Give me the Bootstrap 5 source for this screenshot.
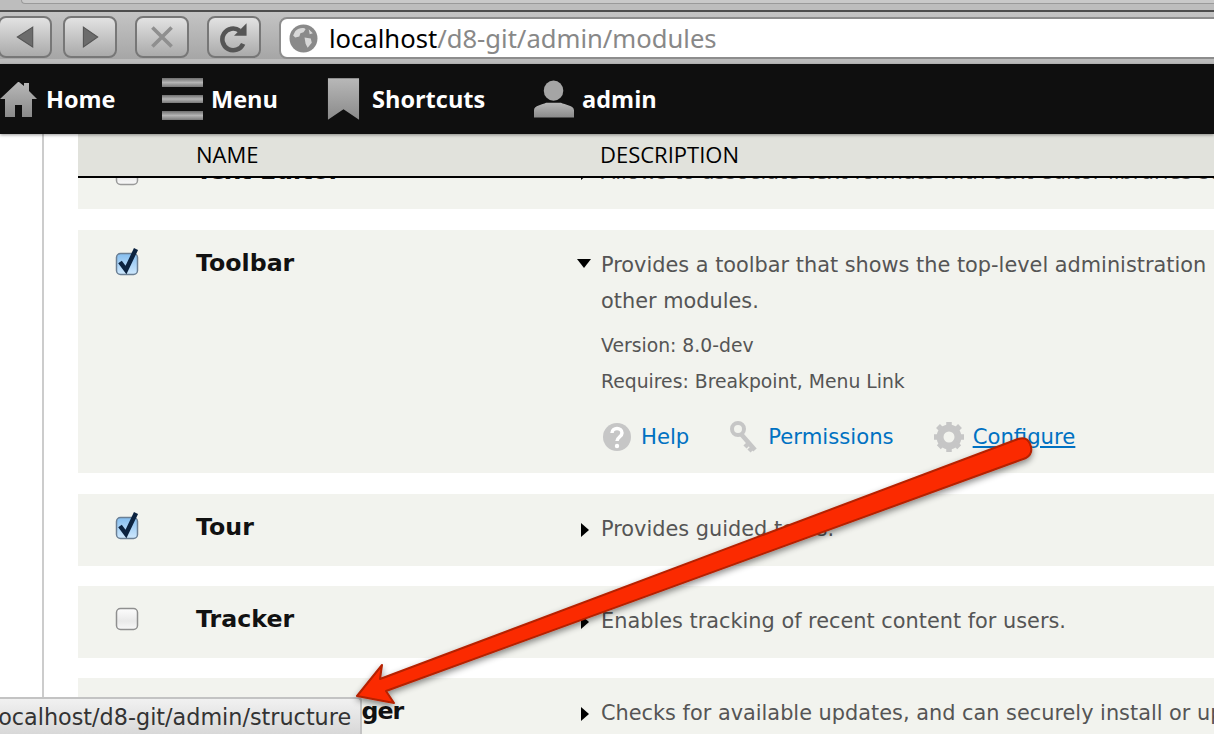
<!doctype html>
<html lang="en"><head><meta charset="utf-8"><title>Modules</title>
<link rel="stylesheet" href="https://cdn.jsdelivr.net/npm/bootstrap@5.3.0/dist/css/bootstrap.min.css">
<style>
html,body{height:100%;overflow:hidden;background:#fff}
.shot{width:1214px;height:734px;overflow:hidden;position:relative;font-family:"DejaVu Sans","Liberation Sans",sans-serif}
.chrome{height:64px;background:#bdbdbd}
.topstrip{height:10px;background:#bdbdbd}
.tabedge{height:4px;margin-left:21px;background:#c9c9c9;border-left:1px solid #9a9a9a;border-bottom:1px solid #9a9a9a;border-bottom-left-radius:8px}
.navrow{height:54px;border-top:2px solid #4d4d4d;padding-top:4px;gap:11px;background:linear-gradient(#c4c4c4,#a6a6a6 90%,#bcbcbc 90%)}
.nbtn{width:54px;height:42px;border:2px solid #777;border-radius:8px;background:linear-gradient(#e2e2e2,#aaa);flex:none}
.nbtn.first{margin-left:-2px}
.nbtn.gapped{margin-left:7px}
.urlbar{height:42px;flex:1;margin:1px -8px 0 7px;background:#fff;border:2px solid #8d8d8d;border-radius:8px;font-family:"Noto Sans",sans-serif;font-size:25.6px;color:#888;padding-left:8px;gap:11px}
.urlbar b{color:#000;font-weight:400}
.urlbar span{padding-top:2px}
.adminbar{height:70px;background:#0f0f0f;color:#fff;font-family:"Open Sans",sans-serif;font-weight:700;font-size:23.5px;position:relative;z-index:3;box-shadow:0 1px 3px rgba(0,0,0,.4)}
.adminbar .tool{gap:4px;flex:none}
.adminbar span{padding-top:2px}
.mainarea{margin-left:42px;border-left:2px solid #ccc;height:600px;padding-left:34px}
.mhead{height:44px;background:#e1e2dc;border-bottom:2px solid #000;color:#000;font-family:"Open Sans",sans-serif;font-size:22px;align-items:center;padding-bottom:2px}
.mhead span:first-child{width:522px;padding-left:118px;flex:none}
.mhead span+span{flex:none}
.modrow{background:#f2f3ee;margin-bottom:20px;display:grid;grid-template-columns:118px 382px 1fr;width:1200px}
.modrow.clipped{height:31px;margin-bottom:21px;overflow:hidden}
.rowtall{height:243px;margin-bottom:21px}
.rowshort{height:72px}
.cbx{padding-left:37px;padding-top:17px}
.clipped .cbx{padding-top:0;margin-top:-17px}
.nm{font-size:23.7px;font-weight:700;color:#111;line-height:32px;white-space:nowrap;padding-top:17px}
.clipped .nm{padding-top:0;margin-top:-23px}
.tight{letter-spacing:-1.05px}
.dsc{font-size:20.85px;color:#555;line-height:36px;padding-left:23px;padding-top:17px;position:relative;white-space:nowrap}
.clipped .dsc{padding-top:0;margin-top:-24px}
.twisty{position:absolute;left:2px;top:29px}
.clipped .twisty{top:12px}
.twisty.open{left:-1px;top:29px}
.meta{font-size:18.8px;line-height:36px;color:#555;margin-top:9px}
.links{font-size:21.2px;line-height:36px;margin-top:19px}
.links a{color:#0071c2;text-decoration:none}
.links a.on{text-decoration:underline}
.ico-help{margin:0 9px 0 1px}
.ico-key{margin-right:9px}
.gap-help{margin-right:41px}
.gap-perm{margin-right:39px}
.tip{position:absolute;left:-20px;bottom:0;height:37px;width:382px;padding-left:10px;background:linear-gradient(#f1f1f1,#d8d8d8);border:2px solid #c3c3c3;border-bottom:0;border-radius:0 4px 0 0;font-size:22.3px;line-height:37px;color:#333;z-index:5;white-space:nowrap;overflow:hidden}
.arrow{position:absolute;left:0;top:0;z-index:6;pointer-events:none}
</style></head><body>
<div class="shot">
<svg width="0" height="0" class="position-absolute"><defs>
<linearGradient id="a" x1="0" y1="0" x2="0" y2="1"><stop offset="0" stop-color="#84bdef"/><stop offset="1" stop-color="#cfe8fd"/></linearGradient>
<linearGradient id="u" x1="0" y1="0" x2="0" y2="1"><stop offset="0" stop-color="#fdfdfd"/><stop offset=".6" stop-color="#e9e9e9"/><stop offset="1" stop-color="#f8f8f8"/></linearGradient>
<linearGradient id="g" x1="0" y1="0" x2="0" y2="1"><stop offset="0" stop-color="#b8b8b8"/><stop offset="1" stop-color="#8a8a8a"/></linearGradient>
<linearGradient id="b" x1="0" y1="0" x2="0" y2="1"><stop offset="0" stop-color="#6f6f6f"/><stop offset=".5" stop-color="#b5b5b5"/><stop offset="1" stop-color="#787878"/></linearGradient>
</defs></svg>
<div class="chrome">
 <div class="topstrip"><div class="tabedge"></div></div>
 <div class="navrow d-flex">
 <div class="nbtn first d-flex align-items-center justify-content-center"><svg width="20" height="22" viewBox="0 0 18 20"><path d="M16 1 2 10l14 9z" fill="#6c6c6c" stroke="#555"/></svg></div>
 <div class="nbtn d-flex align-items-center justify-content-center"><svg width="20" height="22" viewBox="0 0 18 20"><path d="M3 1l13 9L3 19z" fill="#6c6c6c" stroke="#555"/></svg></div>
 <div class="nbtn gapped d-flex align-items-center justify-content-center"><svg width="24" height="24" viewBox="0 0 20 20"><path d="M2 2l16 16M18 2 2 18" stroke="#8f8f8f" stroke-width="3"/></svg></div>
 <div class="nbtn gapped d-flex align-items-center justify-content-center"><svg width="30" height="32" viewBox="0 0 26 28"><path d="M18 8.500A9.500 9.500 0 1 0 21 20" fill="none" stroke="#555" stroke-width="4"/><path d="M13 13 24 2v11z" fill="#555"/></svg></div>
 <div class="urlbar d-flex align-items-center"><svg width="29" height="29" viewBox="0 0 28 28"><circle cx="14" cy="14" r="13.500" fill="#8a8a8a"/><path d="M6 7c3-3 8-4 10-2l-2 3-3 1-1 3-4 1-2-2zM15 13l6 1 1 4-4 5-2-4zM19 5l4 4-3 1z" fill="#d8d8d8"/></svg><span><b>localhost</b>/d8-git/admin/modules</span></div>
 </div>
</div>
<div class="adminbar d-flex align-items-center">
 <div class="tool d-flex align-items-center" style="margin-left:-1px;width:163px"><svg width="39" height="40" viewBox="0 0 39 40"><path d="M19 3 1 20h5v18h10V26h7v12h10V20h5l-8-8V4h-5v3l-5-4z" fill="url(#g)"/></svg><span class="ms-1">Home</span></div>
 <div class="tool d-flex align-items-center" style="width:165px"><svg width="41" height="42" viewBox="0 0 41 42"><rect width="41" height="9" fill="url(#b)"/><rect y="17" width="41" height="8" fill="url(#b)"/><rect y="33" width="41" height="9" fill="url(#b)"/></svg><span class="ms-1">Menu</span></div>
 <div class="tool d-flex align-items-center" style="width:207px"><svg width="33" height="44" viewBox="0 0 35 44"><path d="M1 0h33v44L17.500 33 1 44z" fill="url(#g)"/></svg><span class="ms-2">Shortcuts</span></div>
 <div class="tool d-flex align-items-center"><svg width="40" height="40" viewBox="0 0 43 40"><ellipse cx="21" cy="11" rx="10.500" ry="11" fill="#a5a5a5"/><path d="M0 40v-8c0-5 9-6 13-8h16c4 2 14 3 14 8v8z" fill="url(#g)"/></svg><span class="ms-1">admin</span></div>
</div>
<div class="mainarea">
 <div class="mhead d-flex"><span>NAME</span><span>DESCRIPTION</span></div>
 <div class="modrow clipped">
  <div class="cbx"><svg width="24" height="24" viewBox="0 0 24 24"><rect x="1.500" y="1.500" width="21" height="21" rx="4" fill="url(#u)" stroke="#999" stroke-width="1.500"/></svg></div>
  <div class="nm">Text Editor</div>
  <div class="dsc"><svg class="twisty" width="10" height="14" viewBox="0 0 10 14"><path d="M1 0l8 7-8 7z" fill="#000"/></svg>Allows to associate text formats with text editor libraries such</div>
 </div>
 <div class="modrow rowtall">
  <div class="cbx"><svg width="24" height="30" viewBox="0 0 24 30"><rect x="1.500" y="6.500" width="21" height="21" rx="4" fill="url(#a)" stroke="#6b7f94" stroke-width="1.500"/><path d="M5 15l6 8L21 2" fill="none" stroke="#0c2340" stroke-width="4.500"/></svg></div>
  <div class="nm">Toolbar</div>
  <div class="dsc"><svg class="twisty open" width="14" height="9" viewBox="0 0 14 9"><path d="M0 0h14L7 9z" fill="#000"/></svg>Provides a toolbar that shows the top-level administration menu items and links from<br>other modules.
   <div class="meta">Version: 8.0-dev<br>Requires: Breakpoint, Menu Link</div>
   <div class="links d-flex align-items-center">
    <svg width="30" height="30" viewBox="0 0 30 30" class="ico-help"><circle cx="15" cy="15" r="14" fill="#c6c6c6"/><path d="M10 11c0-6 10-6 10 0 0 4-5 4-5 8" fill="none" stroke="#fff" stroke-width="3.500"/><circle cx="15" cy="24" r="2.200" fill="#fff"/></svg><a href="#" class="gap-help">Help</a>
    <svg width="29" height="33" viewBox="0 0 29 33" class="ico-key"><circle cx="8" cy="8" r="6" fill="none" stroke="#c6c6c6" stroke-width="4"/><path d="M11 13l14 16M19 22l-4 4M23 26l-4 4" stroke="#c6c6c6" stroke-width="4.500" fill="none"/></svg><a href="#" class="gap-perm">Permissions</a>
    <svg width="32" height="32" viewBox="0 0 32 32" class="me-2"><circle cx="16" cy="16" r="9" fill="none" stroke="#c6c6c6" stroke-width="7"/><path d="M16 1v30M1 16h30M5 5l22 22M27 5 5 27" stroke="#c6c6c6" stroke-width="5.500" stroke-dasharray="6 18"/></svg><a href="#" class="on">Configure</a>
   </div>
  </div>
 </div>
 <div class="modrow rowshort">
  <div class="cbx"><svg width="24" height="30" viewBox="0 0 24 30"><rect x="1.500" y="6.500" width="21" height="21" rx="4" fill="url(#a)" stroke="#6b7f94" stroke-width="1.500"/><path d="M5 15l6 8L21 2" fill="none" stroke="#0c2340" stroke-width="4.500"/></svg></div>
  <div class="nm">Tour</div>
  <div class="dsc"><svg class="twisty" width="10" height="14" viewBox="0 0 10 14"><path d="M1 0l8 7-8 7z" fill="#000"/></svg>Provides guided tours.</div>
 </div>
 <div class="modrow rowshort">
  <div class="cbx"><svg width="24" height="24" viewBox="0 0 24 24" class="mt-1"><rect x="1.500" y="1.500" width="21" height="21" rx="4" fill="url(#u)" stroke="#8f8f8f" stroke-width="1.500"/></svg></div>
  <div class="nm">Tracker</div>
  <div class="dsc"><svg class="twisty" width="10" height="14" viewBox="0 0 10 14"><path d="M1 0l8 7-8 7z" fill="#000"/></svg>Enables tracking of recent content for users.</div>
 </div>
 <div class="modrow rowshort">
  <div class="cbx"></div>
  <div class="nm tight">Update Manager</div>
  <div class="dsc"><svg class="twisty" width="10" height="14" viewBox="0 0 10 14"><path d="M1 0l8 7-8 7z" fill="#000"/></svg>Checks for available updates, and can securely install or update modules</div>
 </div>
</div>
<svg class="arrow" width="1214" height="734" viewBox="0 0 1214 734"><defs><filter id="s" x="-10%" y="-10%" width="120%" height="130%"><feDropShadow dx="0" dy="3" stdDeviation="3" flood-color="#000" flood-opacity=".45"/></filter></defs>
<path d="M1018 439 380 679 382 665 357 696 394 703 386 691 1026 458Q1034 453 1030 444 1027 436 1018 439Z" fill="#fb2c00" stroke="#b52000" stroke-width="2" stroke-linejoin="round" filter="url(#s)"/></svg>
<div class="tip">localhost/d8-git/admin/structure</div>
</div>
</body></html>
